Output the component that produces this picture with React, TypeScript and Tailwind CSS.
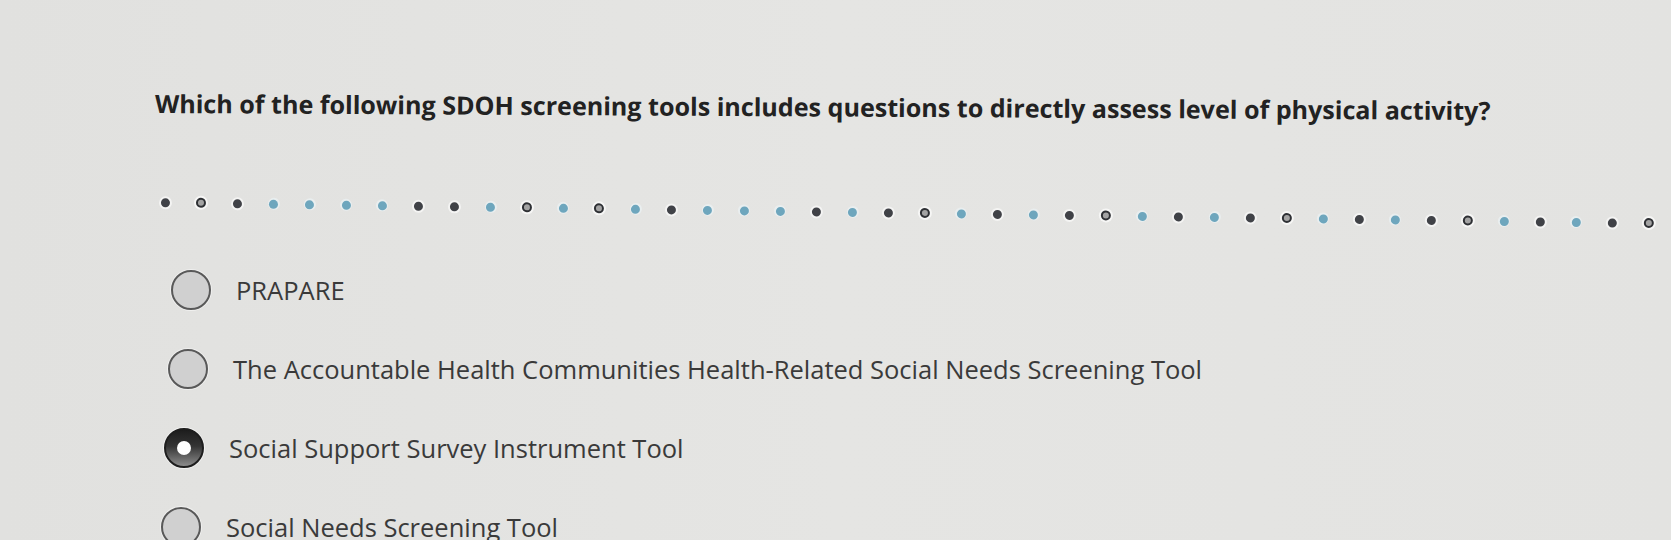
import React from "react";

type DotKind = "d" | "r" | "b";

const dotSeq = "drdbbbbddbrbrbdb" + "bbdbdrbdbdrbdbdrb" + "dbdrbdbdr";

function Dot({ kind }: { kind: DotKind }) {
  if (kind === "d") {
    return (
      <span className="block w-[13px] h-[13px] rounded-full bg-[#f4f4f3] flex items-center justify-center">
        <span className="block w-[9px] h-[9px] rounded-full bg-[#404247]" />
      </span>
    );
  }
  if (kind === "r") {
    return (
      <span className="block w-[14px] h-[14px] rounded-full bg-[#f6f6f5] flex items-center justify-center">
        <span className="block w-[10px] h-[10px] rounded-full border-[2.5px] border-[#2e3034] bg-[#a3a3a3]" />
      </span>
    );
  }
  return (
    <span className="block w-[12px] h-[12px] rounded-full bg-[#e9eeef] flex items-center justify-center">
      <span className="block w-[9px] h-[9px] rounded-full bg-[#6ea6bd]" />
    </span>
  );
}

function Radio({ selected }: { selected: boolean }) {
  if (selected) {
    return (
      <span className="shrink-0 w-[42px] h-[42px] rounded-full p-[1px] bg-[#f2f2f1] flex items-center justify-center">
        <span className="w-[40px] h-[40px] rounded-full border-[2px] border-[#1e1e1e] bg-[linear-gradient(to_bottom,#1d1d1d_0%,#343434_45%,#8c8c8c_100%)] flex items-center justify-center">
          <span className="block w-[14px] h-[14px] rounded-full bg-white" />
        </span>
      </span>
    );
  }
  return (
    <span className="shrink-0 w-[42px] h-[42px] rounded-full p-[1px] bg-[#f0f0ef] flex items-center justify-center">
      <span className="block w-[40px] h-[40px] rounded-full border-[2px] border-[#595959] bg-[#d0d0d0]" />
    </span>
  );
}

const options = [
  { label: "PRAPARE", selected: false, pad: "pl-[170px]" },
  {
    label:
      "The Accountable Health Communities Health-Related Social Needs Screening Tool",
    selected: false,
    pad: "pl-[167px]",
  },
  { label: "Social Support Survey Instrument Tool", selected: true, pad: "pl-[163px]" },
  { label: "Social Needs Screening Tool", selected: false, pad: "pl-[160px]" },
];

export default function App() {
  return (
    <div className="w-[1671px] h-[540px] overflow-hidden bg-[linear-gradient(to_right,#e1e1df,#e5e5e3_50%,#e3e3e1)] font-['Open_Sans',sans-serif]">
      <div className="pt-[87px] pl-[155px]">
        <h1 className="text-[25.1px] leading-[32px] font-bold text-[#222222] origin-left rotate-[0.3deg] whitespace-nowrap">
          Which of the following SDOH screening tools includes questions to directly assess level of physical activity?
        </h1>
      </div>
      <div className="mt-[73px] pl-[147px] flex items-center origin-left rotate-[0.8deg]">
        {dotSeq.split("").map((k, i) => (
          <span key={i} className="w-[36.2px] h-[16px] flex items-center justify-center">
            <Dot kind={k as DotKind} />
          </span>
        ))}
      </div>
      <div className="mt-[61px] flex flex-col gap-[37px]">
        {options.map((o) => (
          <div key={o.label} className={`${o.pad} flex items-center gap-[24px] h-[42px]`}>
            <Radio selected={o.selected} />
            <span className="text-[25.5px] leading-[34px] text-[#3a3a3a] whitespace-nowrap">
              {o.label}
            </span>
          </div>
        ))}
      </div>
    </div>
  );
}
